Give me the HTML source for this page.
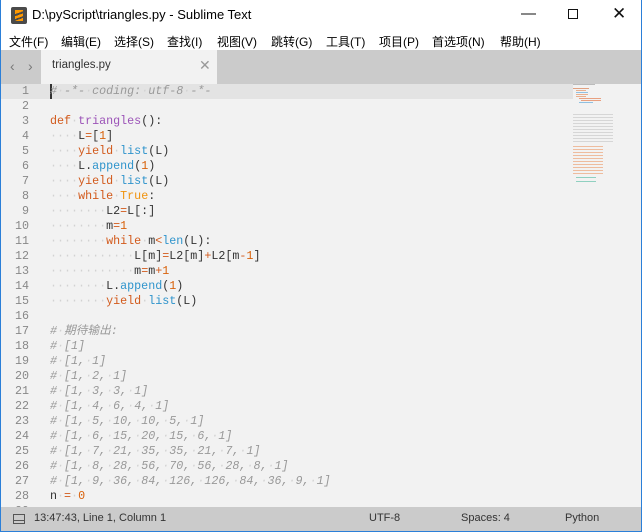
<!DOCTYPE html>
<html><head><meta charset="utf-8"><style>
*{margin:0;padding:0;box-sizing:border-box}
body{width:642px;height:532px;overflow:hidden;background:#f2f2f2;font-family:"Liberation Sans","Noto Sans CJK SC",sans-serif;position:relative;border-left:1px solid #2b7fd8;border-right:1px solid #2b7fd8;border-bottom:1px solid #2b7fd8}
.title{position:absolute;left:0;top:0;width:640px;height:32px;background:#fff}
.title .t{position:absolute;left:31px;top:7px;font-size:13px;color:#000}
.logo{position:absolute;left:10px;top:7px;width:16px;height:17px;background:#4a4a4a;border-radius:2px}
.logo:after{content:"";position:absolute;left:4px;top:3px;width:8px;height:11px;background:linear-gradient(160deg,#ff9800 0 30%,transparent 30% 45%,#ff9800 45% 65%,transparent 65% 78%,#ff9800 78%)}
.wb{position:absolute;top:6px;font-size:15px;color:#111}
.menu{position:absolute;left:0;top:32px;width:640px;height:18px;background:#fff;font-size:12px;color:#000}
.menu span{position:absolute;top:1px}
.tabbar{position:absolute;left:0;top:50px;width:640px;height:34px;background:#cbcbcb}
.tab{position:absolute;left:40px;top:0;width:176px;height:34px;background:#f2f2f2}
.tab .n{position:absolute;left:11px;top:9px;font-size:11.5px;color:#333}
.tab .x{position:absolute;left:158px;top:7px;font-size:14px;color:#999}
.arr{position:absolute;top:8px;font-size:14px;color:#777}
.dots{position:absolute;left:612px;top:59px;font-size:12px;color:#777;letter-spacing:1px}
.hl{position:absolute;left:0;top:84px;width:572px;height:15px;background:#e3e3e3}
.cur{position:absolute;left:49px;top:84px;width:2px;height:15px;background:#333}
.code{position:absolute;left:0;top:84px;font-family:"Liberation Mono","Noto Sans CJK SC",monospace;font-size:11.7px;line-height:15px;white-space:pre;color:#333}
.ln{display:inline-block;width:28px;text-align:right;color:#888;margin-right:21px}
.d{color:#d2d2d2}.k{color:#d25a1c}.f{color:#9c54b8}.b{color:#2f94cc}.n1{color:#d8620c}.o{color:#f0920c}.c{color:#999;font-style:italic}
.status{position:absolute;left:0;top:507px;width:640px;height:24px;background:#cbcbcb;font-size:11px;color:#333}
.status span{position:absolute;top:5px}
.mm{position:absolute;height:1px}
</style></head><body>
<div class="title"><div class="logo"></div><div class="t">D:\pyScript\triangles.py - Sublime Text</div>
<div class="wb" style="left:520px;top:5px">—</div>
<div style="position:absolute;left:567px;top:9px;width:10px;height:10px;border:1px solid #111"></div>
<div class="wb" style="left:611px;top:4px;font-size:17px">✕</div></div>
<div class="menu"><span style="left:8px">文件(F)</span><span style="left:60px">编辑(E)</span><span style="left:113px">选择(S)</span><span style="left:166px">查找(I)</span><span style="left:216px">视图(V)</span><span style="left:270px">跳转(G)</span><span style="left:325px">工具(T)</span><span style="left:378px">项目(P)</span><span style="left:431px">首选项(N)</span><span style="left:499px">帮助(H)</span></div>
<div class="tabbar"><span class="arr" style="left:9px">&#8249;</span><span class="arr" style="left:27px">&#8250;</span>
<div class="tab"><span class="n">triangles.py</span><span class="x">✕</span></div></div>
<div class="dots">•••</div>
<div class="hl"></div>
<div class="cur"></div>
<div class="code"><span class="ln">1</span><span class="c">#<span class="d">·</span>-*-<span class="d">·</span>coding:<span class="d">·</span>utf-8<span class="d">·</span>-*-</span>
<span class="ln">2</span>
<span class="ln">3</span><span class="k">def</span><span class="d">·</span><span class="f">triangles</span>():
<span class="ln">4</span><span class="d">····</span>L<span class="k">=</span>[<span class="n1">1</span>]
<span class="ln">5</span><span class="d">····</span><span class="k">yield</span><span class="d">·</span><span class="b">list</span>(L)
<span class="ln">6</span><span class="d">····</span>L.<span class="b">append</span>(<span class="n1">1</span>)
<span class="ln">7</span><span class="d">····</span><span class="k">yield</span><span class="d">·</span><span class="b">list</span>(L)
<span class="ln">8</span><span class="d">····</span><span class="k">while</span><span class="d">·</span><span class="o">True</span>:
<span class="ln">9</span><span class="d">········</span>L2<span class="k">=</span>L[:]
<span class="ln">10</span><span class="d">········</span>m<span class="k">=</span><span class="n1">1</span>
<span class="ln">11</span><span class="d">········</span><span class="k">while</span><span class="d">·</span>m<span class="k">&lt;</span><span class="b">len</span>(L):
<span class="ln">12</span><span class="d">············</span>L[m]<span class="k">=</span>L2[m]<span class="k">+</span>L2[m<span class="k">-</span><span class="n1">1</span>]
<span class="ln">13</span><span class="d">············</span>m<span class="k">=</span>m<span class="k">+</span><span class="n1">1</span>
<span class="ln">14</span><span class="d">········</span>L.<span class="b">append</span>(<span class="n1">1</span>)
<span class="ln">15</span><span class="d">········</span><span class="k">yield</span><span class="d">·</span><span class="b">list</span>(L)
<span class="ln">16</span>
<span class="ln">17</span><span class="c">#<span class="d">·</span>期待输出:</span>
<span class="ln">18</span><span class="c">#<span class="d">·</span>[1]</span>
<span class="ln">19</span><span class="c">#<span class="d">·</span>[1,<span class="d">·</span>1]</span>
<span class="ln">20</span><span class="c">#<span class="d">·</span>[1,<span class="d">·</span>2,<span class="d">·</span>1]</span>
<span class="ln">21</span><span class="c">#<span class="d">·</span>[1,<span class="d">·</span>3,<span class="d">·</span>3,<span class="d">·</span>1]</span>
<span class="ln">22</span><span class="c">#<span class="d">·</span>[1,<span class="d">·</span>4,<span class="d">·</span>6,<span class="d">·</span>4,<span class="d">·</span>1]</span>
<span class="ln">23</span><span class="c">#<span class="d">·</span>[1,<span class="d">·</span>5,<span class="d">·</span>10,<span class="d">·</span>10,<span class="d">·</span>5,<span class="d">·</span>1]</span>
<span class="ln">24</span><span class="c">#<span class="d">·</span>[1,<span class="d">·</span>6,<span class="d">·</span>15,<span class="d">·</span>20,<span class="d">·</span>15,<span class="d">·</span>6,<span class="d">·</span>1]</span>
<span class="ln">25</span><span class="c">#<span class="d">·</span>[1,<span class="d">·</span>7,<span class="d">·</span>21,<span class="d">·</span>35,<span class="d">·</span>35,<span class="d">·</span>21,<span class="d">·</span>7,<span class="d">·</span>1]</span>
<span class="ln">26</span><span class="c">#<span class="d">·</span>[1,<span class="d">·</span>8,<span class="d">·</span>28,<span class="d">·</span>56,<span class="d">·</span>70,<span class="d">·</span>56,<span class="d">·</span>28,<span class="d">·</span>8,<span class="d">·</span>1]</span>
<span class="ln">27</span><span class="c">#<span class="d">·</span>[1,<span class="d">·</span>9,<span class="d">·</span>36,<span class="d">·</span>84,<span class="d">·</span>126,<span class="d">·</span>126,<span class="d">·</span>84,<span class="d">·</span>36,<span class="d">·</span>9,<span class="d">·</span>1]</span>
<span class="ln">28</span>n<span class="d">·</span><span class="k">=</span><span class="d">·</span><span class="n1">0</span>
<span class="ln">29</span>
</div>
<div style="position:absolute;left:540px;top:84px;width:32px;height:14px;background:#e3e3e3"></div>
<div class="mm" style="left:572px;top:84px;width:22px;background:#bbb"></div>
<div class="mm" style="left:572px;top:88px;width:16px;background:#e0a080"></div>
<div class="mm" style="left:575px;top:90px;width:10px;background:#e8b090"></div>
<div class="mm" style="left:575px;top:92px;width:12px;background:#90c0e0"></div>
<div class="mm" style="left:575px;top:94px;width:12px;background:#e8b090"></div>
<div class="mm" style="left:575px;top:96px;width:10px;background:#e8b090"></div>
<div class="mm" style="left:578px;top:98px;width:22px;background:#e8a080"></div>
<div class="mm" style="left:580px;top:100px;width:20px;background:#e8a080"></div>
<div class="mm" style="left:578px;top:102px;width:14px;background:#90c0e0"></div>
<div style="position:absolute;left:572px;top:114px;width:40px;height:30px;background:repeating-linear-gradient(#d6d6d6 0 1px,transparent 1px 3px)"></div>
<div style="position:absolute;left:572px;top:146px;width:30px;height:30px;background:repeating-linear-gradient(#eebc9e 0 1px,transparent 1px 3px)"></div>
<div class="mm" style="left:575px;top:177px;width:20px;background:#90d0c0"></div>
<div class="mm" style="left:575px;top:181px;width:20px;background:#90d0c0"></div>
<div style="position:absolute;left:572px;top:53px;width:68px;height:31px;background:#cbcbcb"></div>
<div class="status">
<div style="position:absolute;left:12px;top:7px;width:12px;height:10px;border:1px solid #555;border-top-width:1px"><div style="margin-top:5px;border-top:1px solid #555"></div></div>
<span style="left:33px">13:47:43, Line 1, Column 1</span><span style="left:368px">UTF-8</span><span style="left:460px">Spaces: 4</span><span style="left:564px">Python</span></div>
</body></html>
